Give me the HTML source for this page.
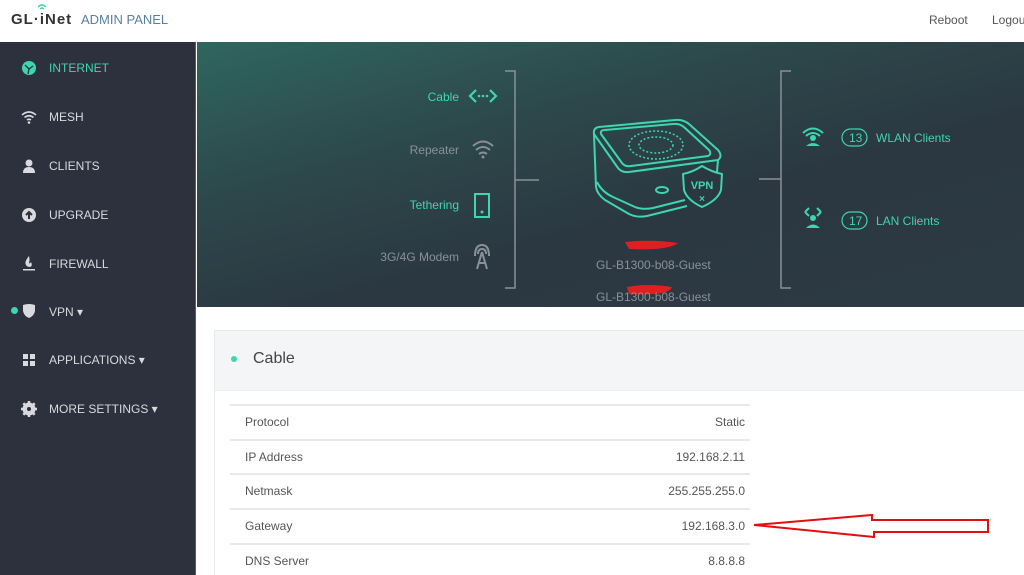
<!DOCTYPE html>
<html><head><meta charset="utf-8"><style>
*{margin:0;padding:0;box-sizing:border-box}
html,body{width:1024px;height:575px;overflow:hidden}
body{background:#fff;font-family:"Liberation Sans",sans-serif;position:relative}
.hdr{position:absolute;left:0;top:0;width:1024px;height:42px;background:#fff}
.logo{position:absolute;left:11px;top:11px;font-size:15px;font-weight:bold;color:#333;letter-spacing:1px}
.ap{position:absolute;left:81px;top:12px;font-size:13px;color:#5a7f9c}
.hr{position:absolute;top:13px;font-size:12px;color:#555}
.side{position:absolute;left:0;top:42px;width:196px;height:533px;background:#2d303d}
.item{position:absolute;left:49px;font-size:12px;color:#d8dae0}
.ic{position:absolute;left:21px;width:16px;height:16px}
.ban{position:absolute;left:197px;top:42px;width:827px;height:265px;background:linear-gradient(165deg,#2f6660 0%,#2d4a4c 30%,#2b3842 60%,#2c3a43 100%)}
.t{position:absolute;font-size:12px;text-align:right}
.card{position:absolute;left:214px;top:330px;width:820px;height:245px;border:1px solid #e6e8ea;border-bottom:none;background:#fff;overflow:hidden}
.ch{height:60px;background:#f4f5f6;border-bottom:1px solid #eceef0}
.row{position:absolute;left:15px;width:520px;height:35px;border-top:2px solid #e8e9eb;font-size:12px;color:#555}
.row span{position:absolute;top:9px}
</style></head><body>
<div class="hdr">
<div class="logo">GL·iNet</div>
<svg style="position:absolute;left:37px;top:3px" width="10" height="7"><path d="M1 4 Q5 0 9 4 M3 6 Q5 4 7 6" stroke="#3dd6b0" stroke-width="1.3" fill="none"/></svg>
<div class="ap">ADMIN PANEL</div>
<div class="hr" style="left:929px">Reboot</div>
<div class="hr" style="left:992px">Logout</div>
</div>
<div class="side">
<div style="position:absolute;left:195px;top:0;width:1px;height:533px;background:#3a6e64"></div>
<svg class="ic" style="top:18px" viewBox="0 0 16 16"><circle cx="8" cy="8" r="7" fill="#3dd6b0"/><path d="M4 5 L8 9 L12 6 M8 9 L7 14" stroke="#2d303d" stroke-width="1.3" fill="none"/></svg>
<div class="item" style="top:19px;color:#3dd6b0">INTERNET</div>
<svg class="ic" style="top:67px" viewBox="0 0 16 16"><path d="M1 6 Q8 0 15 6 M3.5 8.5 Q8 5 12.5 8.5 M6 11 Q8 9.5 10 11" stroke="#d8dae0" stroke-width="1.6" fill="none"/><circle cx="8" cy="13.5" r="1.3" fill="#d8dae0"/></svg>
<div class="item" style="top:68px">MESH</div>
<svg class="ic" style="top:116px" viewBox="0 0 16 16"><circle cx="8" cy="5" r="3.5" fill="#d8dae0"/><path d="M2 15 Q2 9 8 9 Q14 9 14 15Z" fill="#d8dae0"/></svg>
<div class="item" style="top:117px">CLIENTS</div>
<svg class="ic" style="top:165px" viewBox="0 0 16 16"><circle cx="8" cy="8" r="7" fill="#d8dae0"/><path d="M8 12 V5 M5 8 L8 5 L11 8" stroke="#2d303d" stroke-width="2" fill="none"/></svg>
<div class="item" style="top:166px">UPGRADE</div>
<svg class="ic" style="top:213px" viewBox="0 0 16 16"><path d="M8 1 Q3 7 5 10 Q6 12 9 12 Q12 11 10 7 Q9 9 8 8 Q9 5 8 1Z" fill="#d8dae0"/><rect x="2" y="14" width="12" height="1.5" fill="#d8dae0"/></svg>
<div class="item" style="top:215px">FIREWALL</div>
<div style="position:absolute;left:11px;top:265px;width:7px;height:7px;border-radius:50%;background:#3dd6b0"></div>
<svg class="ic" style="top:261px" viewBox="0 0 16 16"><path d="M2 2 Q8 0 14 2 L14 8 Q13 13 8 15 Q3 13 2 8Z" fill="#d8dae0"/></svg>
<div class="item" style="top:263px">VPN ▾</div>
<svg class="ic" style="top:310px" viewBox="0 0 16 16"><rect x="2" y="2" width="5" height="5" fill="#d8dae0"/><rect x="9" y="2" width="5" height="5" fill="#d8dae0"/><rect x="2" y="9" width="5" height="5" fill="#d8dae0"/><rect x="9" y="9" width="5" height="5" fill="#d8dae0"/></svg>
<div class="item" style="top:311px">APPLICATIONS ▾</div>
<svg class="ic" style="top:359px" viewBox="0 0 16 16"><circle cx="8" cy="8" r="5" fill="none" stroke="#d8dae0" stroke-width="3"/><path d="M8 0V16M0 8H16M2.3 2.3L13.7 13.7M13.7 2.3L2.3 13.7" stroke="#d8dae0" stroke-width="2.5"/><circle cx="8" cy="8" r="2" fill="#2d303d"/></svg>
<div class="item" style="top:360px">MORE SETTINGS ▾</div>
</div>
<div class="ban">
<div class="t" style="right:565px;top:48px;color:#3dd6b0">Cable</div>
<div class="t" style="right:565px;top:101px;color:#8a9098">Repeater</div>
<div class="t" style="right:565px;top:156px;color:#3dd6b0">Tethering</div>
<div class="t" style="right:565px;top:208px;color:#8a9098">3G/4G Modem</div>
<svg style="position:absolute;left:270px;top:40px" width="32" height="190">
<path d="M9 8 L3 14 L9 20 M23 8 L29 14 L23 20" stroke="#3dd6b0" stroke-width="2.2" fill="none"/><circle cx="12" cy="14" r="1.3" fill="#3dd6b0"/><circle cx="16" cy="14" r="1.3" fill="#3dd6b0"/><circle cx="20" cy="14" r="1.3" fill="#3dd6b0"/>
<path d="M6 64 Q16 55 26 64 M9 68 Q16 62 23 68 M12 72 Q16 69 20 72" stroke="#8a9098" stroke-width="2" fill="none"/><circle cx="16" cy="75" r="1.5" fill="#8a9098"/>
<rect x="8" y="112" width="14" height="23" stroke="#3dd6b0" stroke-width="2" fill="none"/><circle cx="15" cy="130" r="1.5" fill="#3dd6b0"/>
<path d="M8 174 Q8 163 15 163 Q22 163 22 174 M11 172 Q11 167 15 167 Q19 167 19 172 M15 170 L10 187 M15 170 L20 187 M12 181 H18" stroke="#8a9098" stroke-width="2" fill="none"/>
</svg>
<svg style="position:absolute;left:0;top:0" width="827" height="265">
<path d="M308 29 H318 V246 H308 M318 138 H342" stroke="#8a9098" stroke-width="1.5" fill="none"/>
<path d="M594 29 H584 V246 H594 M584 137 H562" stroke="#8a9098" stroke-width="1.5" fill="none"/>
<g stroke="#3dd6b0" stroke-width="2" fill="none" stroke-linejoin="round">
<path d="M397 92 Q396 86 402 85 L478 78 Q486 77 492 82 L521 108 Q526 114 521 118 L432 130 Q425 131 421 126 Z"/>
<path d="M404 92 Q403 88 408 88 L476 82 Q483 81 488 86 L512 108 Q515 112 511 114 L434 124 Q428 125 425 121 Z"/>
<path d="M397 92 L399 145 Q400 152 408 158 L432 172 Q440 176 450 174 L490 164 M521 118 L520 130"/>
<path d="M400 140 Q405 150 416 155 L438 165 Q446 168 456 166 L488 158"/>
<ellipse cx="465" cy="148" rx="6" ry="3"/>
<ellipse cx="459" cy="103" rx="27" ry="14" stroke-dasharray="2 2" stroke-width="1.5"/>
<ellipse cx="459" cy="103" rx="17" ry="8" stroke-dasharray="2 2" stroke-width="1.5"/>
<path d="M486 132 Q496 130 505 124 Q515 130 525 132 L524 148 Q521 158 505 165 Q490 158 487 148 Z" fill="#2b3842"/>
</g>
<text x="505" y="147" font-family="Liberation Sans" font-weight="bold" font-size="11" fill="#3dd6b0" text-anchor="middle">VPN</text>
<text x="505" y="160" font-family="Liberation Sans" font-weight="bold" font-size="10" fill="#3dd6b0" text-anchor="middle">×</text>
<path d="M428 200 Q455 197 481 201 Q470 209 432 207Z" fill="#e02020"/>
<path d="M430 245 Q450 241 475 245 Q473 254 432 252Z" fill="#e02020"/>
<g stroke="#3dd6b0" stroke-width="2" fill="none"><path d="M606 91 Q616 82 626 91 M609 94 Q616 88 623 94"/></g>
<circle cx="616" cy="96" r="3" fill="#3dd6b0"/><path d="M609 104 Q616 98 623 104Z" fill="#3dd6b0"/>
<path d="M608 170 L612 166 M624 170 L620 166 M608 170 L612 174 M624 170 L620 174" stroke="#3dd6b0" stroke-width="2"/>
<circle cx="616" cy="176" r="3" fill="#3dd6b0"/><path d="M609 186 Q616 179 623 186Z" fill="#3dd6b0"/>
<rect x="645" y="87" width="25" height="17" rx="8.5" stroke="#3dd6b0" stroke-width="1.2" fill="none"/>
<rect x="645" y="170" width="25" height="17" rx="8.5" stroke="#3dd6b0" stroke-width="1.2" fill="none"/>
</svg>
<div class="t" style="left:652px;top:89px;color:#3dd6b0">13</div>
<div class="t" style="left:679px;top:89px;color:#3dd6b0">WLAN Clients</div>
<div class="t" style="left:652px;top:172px;color:#3dd6b0">17</div>
<div class="t" style="left:679px;top:172px;color:#3dd6b0">LAN Clients</div>
<div class="t" style="left:399px;top:216px;color:#8a9098;text-align:left">GL-B1300-b08-Guest</div>
<div class="t" style="left:399px;top:248px;color:#8a9098;text-align:left">GL-B1300-b08-Guest</div>
</div>
<div class="card">
<div class="ch"><div style="position:absolute;left:16px;top:25px;width:6px;height:6px;border-radius:50%;background:#3dd6b0"></div><div style="position:absolute;left:38px;top:19px;font-size:16px;color:#444">Cable</div></div>
<div class="row" style="top:73px"><span style="left:15px">Protocol</span><span style="right:5px">Static</span></div>
<div class="row" style="top:108px"><span style="left:15px">IP Address</span><span style="right:5px">192.168.2.11</span></div>
<div class="row" style="top:142px"><span style="left:15px">Netmask</span><span style="right:5px">255.255.255.0</span></div>
<div class="row" style="top:177px"><span style="left:15px">Gateway</span><span style="right:5px">192.168.3.0</span></div>
<div class="row" style="top:212px"><span style="left:15px">DNS Server</span><span style="right:5px">8.8.8.8</span></div>
</div>
<svg style="position:absolute;left:0;top:0" width="1024" height="575"><path d="M754 525 L872 515 L872 520 L988 520 L988 532 L874 532 L874 537 Z" stroke="#e01010" stroke-width="2" fill="none"/></svg>
</body></html>
